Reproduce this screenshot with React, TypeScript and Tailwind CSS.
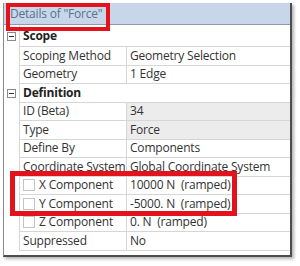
import React from 'react';

type Item =
  | { kind: 'section'; label: string }
  | { kind: 'prop'; label: string; value: string; check?: boolean; readOnly?: boolean };

const items: Item[] = [
  { kind: 'section', label: 'Scope' },
  { kind: 'prop', label: 'Scoping Method', value: 'Geometry Selection' },
  { kind: 'prop', label: 'Geometry', value: '1 Edge' },
  { kind: 'section', label: 'Definition' },
  { kind: 'prop', label: 'ID (Beta)', value: '34', readOnly: true },
  { kind: 'prop', label: 'Type', value: 'Force', readOnly: true },
  { kind: 'prop', label: 'Define By', value: 'Components' },
  { kind: 'prop', label: 'Coordinate System', value: 'Global Coordinate System' },
  { kind: 'prop', label: 'X Component', value: '10000 N  (ramped)', check: true },
  { kind: 'prop', label: 'Y Component', value: '-5000. N  (ramped)', check: true },
  { kind: 'prop', label: 'Z Component', value: '0. N  (ramped)', check: true },
  { kind: 'prop', label: 'Suppressed', value: 'No' },
];

const MinusBox: React.FC = () => (
  <div className="w-[9px] h-[9px] border border-[#8a8a8a] bg-white flex items-center justify-center">
    <div className="w-[5px] h-px bg-[#333]" />
  </div>
);

const Row: React.FC<{ item: Item; first: boolean }> = ({ item, first }) => {
  const h = first ? 'h-[22px]' : 'h-[18.5px]';
  if (item.kind === 'section') {
    return (
      <div className={`flex ${h}`}>
        <div className="w-[16px] flex items-center justify-center border-r border-[#d6d6d6]">
          <MinusBox />
        </div>
        <div className="flex-1 flex items-center pl-[3px] font-bold text-[#222] border-b border-[#d6d6d6]">
          {item.label}
        </div>
      </div>
    );
  }
  return (
    <div className={`flex ${h}`}>
      <div className="w-[16px] border-r border-[#d6d6d6]" />
      <div className="w-[107px] flex items-center pl-[3px] border-b border-r border-[#d6d6d6] text-[#333] overflow-hidden">
        {item.check && <div className="w-[12px] h-[12px] border border-[#c4c4c4] bg-white mr-[4px] shrink-0" />}
        <span className="whitespace-nowrap">{item.label}</span>
      </div>
      <div
        className={`flex-1 flex items-center pl-[3px] border-b border-[#d6d6d6] text-[#333] whitespace-pre ${
          item.readOnly ? 'bg-[#ececec]' : 'bg-white'
        }`}
      >
        {item.value}
      </div>
    </div>
  );
};

export default function App() {
  return (
    <div className="relative w-[300px] h-[266px] bg-white font-['Open_Sans',sans-serif] text-[12px] leading-none tracking-[-0.2px] pt-[3px] pl-[3px]">
      <div className="w-[289px] border-l border-[#8c8c8c] border-r-2 border-r-[#4d4d4d] border-b-2 border-b-[#4d4d4d] shadow-[2px_2px_3px_rgba(0,0,0,0.3)] bg-white pb-[4px]">
        <div className="h-[22px] bg-[#c7d7e9] border-b border-[#8e9aa8] flex items-center pl-[6px] text-[#5d7090]">
          Details of "Force"
        </div>
        {items.map((it, i) => (
          <Row key={i} item={it} first={i === 0} />
        ))}
      </div>

      <div className="absolute left-[6px] top-[3px] w-[104px] h-[28px] border-4 border-[#e3121b]" />
      <div className="absolute left-[10px] top-[171px] w-[227px] h-[45px] border-[5px] border-[#e3121b]" />
    </div>
  );
}
